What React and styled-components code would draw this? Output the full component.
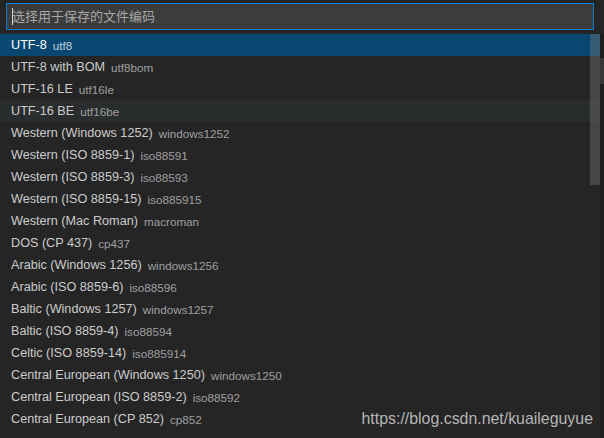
import styled, { createGlobalStyle } from 'styled-components';

const GlobalStyle = createGlobalStyle`
  html, body {
    margin: 0;
    padding: 0;
    background: #252526;
  }
  * {
    box-sizing: border-box;
  }
`

const Root = styled.div`
  position: relative;
  width: 604px;
  height: 438px;
  background: #252526;
  display: flex;
  flex-direction: column;
  overflow: hidden;
  font-family: "Liberation Sans", Arial, "Noto Sans CJK SC", sans-serif;
  font-size: 13px;
`

const InputWrap = styled.div`
  padding: 3px 10px 4px 6px;
`

const InputBox = styled.div`
  position: relative;
  height: 27px;
  background: #3c3c3c;
  border: 1px solid #007fd4;
  display: flex;
  align-items: center;
  padding-left: 5px;
`

const Caret = styled.span`
  position: absolute;
  left: 5px;
  top: 4px;
  width: 1px;
  height: 17px;
  background: #cfcfcf;
`

const Input = styled.input`
  flex: 1;
  height: 100%;
  border: none;
  outline: none;
  background: transparent;
  color: #cccccc;
  padding: 0;
  font-family: "Liberation Sans", Arial, "Noto Sans CJK SC", sans-serif;
  font-size: 13px;
  &::placeholder {
    color: #a6a6a6;
    opacity: 1;
  }
`

const Body = styled.div`
  display: flex;
  flex: 1;
`

const List = styled.div`
  position: relative;
  width: 600px;
`

const Row = styled.div`
  height: 22px;
  display: flex;
  align-items: center;
  padding-left: 11px;
  white-space: nowrap;
  font-size: 12.65px;
  background: ${props => props.$selected ? '#094771' : props.$hover ? '#2a2d2e' : 'transparent'};
  color: ${props => props.$selected ? '#ffffff' : '#cccccc'};
`

const Desc = styled.span`
  margin-left: 6px;
  font-size: 11.7px;
  opacity: 0.72;
`

const ScrollThumb = styled.div`
  position: absolute;
  right: 0;
  top: 0;
  width: 10px;
  height: 151px;
  background: rgba(121, 121, 121, 0.4);
`

const EditorStrip = styled.div`
  width: 4px;
  background: #1e1e1e;
  padding-top: 24px;
`

const EditorThumb = styled.div`
  height: 26px;
  background: #373737;
`

const Watermark = styled.div`
  position: absolute;
  right: 11px;
  bottom: 9px;
  font-family: "Liberation Sans", Arial, sans-serif;
  font-size: 15.9px;
  color: rgba(210, 210, 210, 0.85);
  line-height: 20px;
`

const encodings = [
  ['UTF-8', 'utf8'],
  ['UTF-8 with BOM', 'utf8bom'],
  ['UTF-16 LE', 'utf16le'],
  ['UTF-16 BE', 'utf16be'],
  ['Western (Windows 1252)', 'windows1252'],
  ['Western (ISO 8859-1)', 'iso88591'],
  ['Western (ISO 8859-3)', 'iso88593'],
  ['Western (ISO 8859-15)', 'iso885915'],
  ['Western (Mac Roman)', 'macroman'],
  ['DOS (CP 437)', 'cp437'],
  ['Arabic (Windows 1256)', 'windows1256'],
  ['Arabic (ISO 8859-6)', 'iso88596'],
  ['Baltic (Windows 1257)', 'windows1257'],
  ['Baltic (ISO 8859-4)', 'iso88594'],
  ['Celtic (ISO 8859-14)', 'iso885914'],
  ['Central European (Windows 1250)', 'windows1250'],
  ['Central European (ISO 8859-2)', 'iso88592'],
  ['Central European (CP 852)', 'cp852'],
]

const App = () => {
  return <Root>
    <GlobalStyle />
    <InputWrap>
      <InputBox>
        <Caret />
        <Input placeholder='选择用于保存的文件编码' />
      </InputBox>
    </InputWrap>
    <Body>
      <List>
        {encodings.map(([label, desc], i) => (
          <Row key={desc} $selected={i === 0} $hover={i === 3}>
            {label}<Desc>{desc}</Desc>
          </Row>
        ))}
        <ScrollThumb />
      </List>
      <EditorStrip>
        <EditorThumb />
      </EditorStrip>
    </Body>
    <Watermark>https://blog.csdn.net/kuaileguyue</Watermark>
  </Root>
}

export default App;
